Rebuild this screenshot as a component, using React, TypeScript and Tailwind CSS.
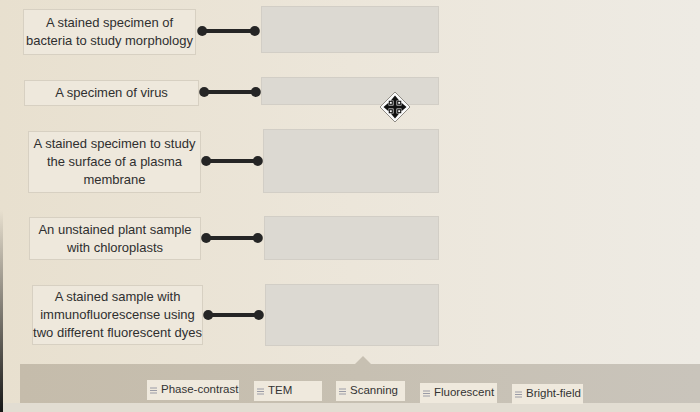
import React from 'react'

type Row = {
  lines: string[]
  rowCls: string
  leftCls: string
  linkW: number
  linkCls: string
  rightCls: string
}

const rows: Row[] = [
  {
    lines: ['A stained specimen of', 'bacteria to study morphology'],
    rowCls: 'mt-[6px] h-[49px]',
    leftCls: 'ml-[23px] w-[173px] h-[46px] self-end',
    linkW: 63,
    linkCls: 'ml-[1px]',
    rightCls: 'ml-[1px] w-[178px] h-[47px] self-start',
  },
  {
    lines: ['A specimen of virus'],
    rowCls: 'mt-[22px] h-[29px]',
    leftCls: 'ml-[24px] w-[175px] h-[26px] self-end',
    linkW: 62,
    linkCls: 'ml-0',
    rightCls: 'ml-0 w-[178px] h-[28px] self-start',
  },
  {
    lines: ['A stained specimen to study', 'the surface of a plasma', 'membrane'],
    rowCls: 'mt-[23px] h-[64px]',
    leftCls: 'ml-[28px] w-[173px] h-[62px] self-end',
    linkW: 62,
    linkCls: 'ml-0',
    rightCls: 'ml-0 w-[176px] h-[64px]',
  },
  {
    lines: ['An unstained plant sample', 'with chloroplasts'],
    rowCls: 'mt-[23px] h-[44px]',
    leftCls: 'ml-[29px] w-[172px] h-[43px] self-end',
    linkW: 62,
    linkCls: 'ml-0',
    rightCls: 'ml-[1px] w-[175px] h-[44px]',
  },
  {
    lines: ['A stained sample with', 'immunofluorescense using', 'two different fluorescent dyes'],
    rowCls: 'mt-[24px] h-[62px]',
    leftCls: 'ml-[32px] w-[171px] h-[60px]',
    linkW: 61,
    linkCls: 'ml-0',
    rightCls: 'ml-[1px] w-[174px] h-[62px]',
  },
]

const chips = [
  { label: 'Phase-contrast', cls: 'ml-[127px] mt-[16px] w-[92px]' },
  { label: 'TEM', cls: 'ml-[15px] mt-[17px] w-[68px]' },
  { label: 'Scanning', cls: 'ml-[14px] mt-[17px] w-[69px]' },
  { label: 'Fluorescent', cls: 'ml-[15px] mt-[19px] w-[77px]' },
  { label: 'Bright-field', cls: 'ml-[15px] mt-[20px] w-[71px]' },
]

function Link({ w }: { w: number }) {
  return (
    <svg width={w} height={12} viewBox={`0 0 ${w} 12`}>
      <line x1={5} y1={6} x2={w - 5} y2={6} stroke="#252525" strokeWidth={4} />
      <circle cx={5.2} cy={6} r={5} fill="#252525" />
      <circle cx={w - 5.2} cy={6} r={5} fill="#252525" />
    </svg>
  )
}

function MoveCursor() {
  return (
    <svg width="32" height="32" viewBox="0 0 32 32">
      <polygon points="16,1 31,16 16,31 1,16" fill="#fafafa" stroke="#8f8b84" strokeWidth="1" />
      {/* four-way arrow */}
      <path d="M16 4.5 L11.8 9.5 H14.5 V14.5 H9.5 V11.8 L4.5 16 L9.5 20.2 V17.5 H14.5 V22.5 H11.8 L16 27.5 L20.2 22.5 H17.5 V17.5 H22.5 V20.2 L27.5 16 L22.5 11.8 V14.5 H17.5 V9.5 H20.2 Z" fill="#111" />
      <rect x="10.3" y="10.3" width="3" height="3" fill="#fafafa" stroke="#111" strokeWidth="1.1" />
      <rect x="18.7" y="10.3" width="3" height="3" fill="#fafafa" stroke="#111" strokeWidth="1.1" />
      <rect x="10.3" y="18.7" width="3" height="3" fill="#fafafa" stroke="#111" strokeWidth="1.1" />
      <rect x="18.7" y="18.7" width="3" height="3" fill="#fafafa" stroke="#111" strokeWidth="1.1" />
    </svg>
  )
}

function Grip() {
  return (
    <svg width="7" height="7" viewBox="0 0 7 7" className="shrink-0">
      <line x1="0" y1="1" x2="7" y2="1" stroke="#9a9ba6" strokeWidth="1" />
      <line x1="0" y1="3.5" x2="7" y2="3.5" stroke="#9a9ba6" strokeWidth="1" />
      <line x1="0" y1="6" x2="7" y2="6" stroke="#9a9ba6" strokeWidth="1" />
    </svg>
  )
}

export default function App() {
  return (
    <div
      className="relative w-[700px] h-[412px] overflow-hidden flex flex-col bg-gradient-to-r from-[#e8e0cf] via-[#ece6da] to-[#eeebe4] text-[#2f2f2f]"
      style={{ fontFamily: '"Liberation Sans", Arial, sans-serif' }}
    >
      {/* matching rows */}
      {rows.map((r, i) => (
        <div key={i} className={`flex items-center ${r.rowCls}`}>
          <div
            className={`shrink-0 flex flex-col items-center justify-center border border-[#d7d0c2] bg-[#eee8dc] text-[13px] leading-[18px] text-center whitespace-nowrap ${r.leftCls}`}
          >
            {r.lines.map(l => (
              <span key={l}>{l}</span>
            ))}
          </div>
          <div className={`shrink-0 flex ${r.linkCls}`}>
            <Link w={r.linkW} />
          </div>
          <div className={`shrink-0 border border-[#d2cec6] bg-[#dcd9d2] ${r.rightCls}`} />
        </div>
      ))}

      {/* answer bank */}
      <div className="relative mt-[18px] ml-[20px] h-[39px] flex items-start bg-gradient-to-r from-[#c5bcab] via-[#c7c0b2] to-[#c9c4bb]">
        <div className="absolute left-[335px] -top-[8px] w-0 h-0 border-l-[8px] border-r-[8px] border-b-[8px] border-l-transparent border-r-transparent border-b-[#c7c0b2]" />
        {chips.map(c => (
          <div
            key={c.label}
            className={`shrink-0 h-[20px] flex items-center gap-[4px] pl-[3px] bg-[#efe9dd] text-[11.5px] text-[#333] whitespace-nowrap ${c.cls}`}
          >
            <Grip />
            <span>{c.label}</span>
          </div>
        ))}
      </div>
      <div className="flex-1 bg-[#e2ddd2]" />

      {/* drag cursor */}
      <div className="absolute left-[379px] top-[91px]">
        <MoveCursor />
      </div>
      {/* monitor bezel edge */}
      <div className="absolute left-0 top-[210px] bottom-0 w-[3px] bg-gradient-to-b from-transparent to-[#161616]" />
    </div>
  )
}
